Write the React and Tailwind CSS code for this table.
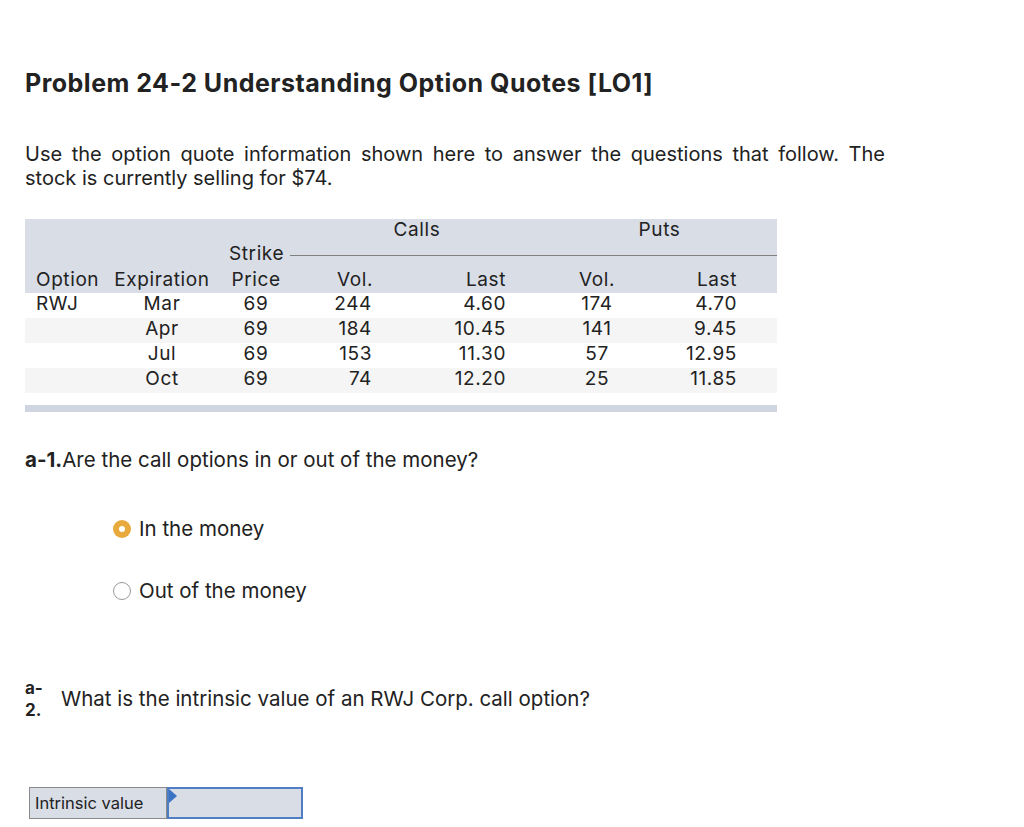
import React from "react";

const rows = [
  { opt: "RWJ", exp: "Mar", strike: "69", cvol: "244", clast: "4.60", pvol: "174", plast: "4.70" },
  { opt: "", exp: "Apr", strike: "69", cvol: "184", clast: "10.45", pvol: "141", plast: "9.45" },
  { opt: "", exp: "Jul", strike: "69", cvol: "153", clast: "11.30", pvol: "57", plast: "12.95" },
  { opt: "", exp: "Oct", strike: "69", cvol: "74", clast: "12.20", pvol: "25", plast: "11.85" },
];

const cols = "grid grid-cols-[83px_108px_80px_88px_134px_158px_101px]";

function Radio({ checked, label }) {
  return (
    <div className="flex items-center h-[24px]">
      {checked ? (
        <span className="w-[18px] h-[18px] rounded-full bg-[#e8a93d] flex items-center justify-center">
          <span className="w-[6px] h-[6px] rounded-full bg-white" />
        </span>
      ) : (
        <span className="w-[18px] h-[18px] rounded-full border border-[#9a9a9a] bg-white" />
      )}
      <span className="ml-[8px]">{label}</span>
    </div>
  );
}

export default function App() {
  return (
    <div
      className="min-h-screen bg-white text-[#222] pl-[25px] pt-[68px]"
      style={{ fontFamily: 'Inter, "Liberation Sans", Arial, sans-serif' }}
    >
      <h1 className="text-[25px] leading-[30px] font-bold tracking-[0.5px]">
        Problem 24-2 Understanding Option Quotes [LO1]
      </h1>

      <div className="mt-[44px] text-[20px] leading-[24px] w-[860px]">
        <p className="text-justify [text-align-last:justify]">
          Use the option quote information shown here to answer the questions that follow. The
        </p>
        <p>stock is currently selling for $74.</p>
      </div>

      {/* quote table */}
      <div className="mt-[29px] w-[752px] text-[19px] leading-[22px] tracking-[0.6px]">
        <div className="bg-[#d9dde6]">
          <div className={`${cols} h-[20px] items-center`}>
            <div className="col-start-4 col-span-2 text-center pl-[20px]">Calls</div>
            <div className="col-span-2 text-center pl-[24px]">Puts</div>
          </div>
          <div className="flex items-center h-[28px] pl-[204px]">
            <span className="mt-[2px]">Strike</span>
            <span className="ml-[6px] mt-[4px] flex-1 h-px bg-[#7f7f7f]" />
          </div>
          <div className={`${cols} h-[26px] items-center`}>
            <div className="pl-[11px]">Option</div>
            <div className="text-center">Expiration</div>
            <div className="text-center">Price</div>
            <div className="text-right pr-[11px]">Vol.</div>
            <div className="text-right pr-[12px]">Last</div>
            <div className="text-center">Vol.</div>
            <div className="text-right pr-[40px]">Last</div>
          </div>
        </div>
        {rows.map((r, i) => (
          <div
            key={i}
            className={`${cols} h-[25px] items-center pb-[3px] ${i % 2 === 1 ? "bg-[#f5f5f5]" : "bg-white"}`}
          >
            <div className="pl-[11px]">{r.opt}</div>
            <div className="text-center">{r.exp}</div>
            <div className="text-center">{r.strike}</div>
            <div className="text-right pr-[12px]">{r.cvol}</div>
            <div className="text-right pr-[12px]">{r.clast}</div>
            <div className="text-center">{r.pvol}</div>
            <div className="text-right pr-[40px]">{r.plast}</div>
          </div>
        ))}
        <div className="mt-[12px] h-[7px] bg-[#cfd5e1]" />
      </div>

      {/* a-1 */}
      <p className="mt-[36px] text-[20.5px] leading-[24px]">
        <span className="font-bold">a-1.</span>Are the call options in or out of the money?
      </p>
      <div className="pl-[88px] text-[20.5px]">
        <div className="mt-[45px]">
          <Radio checked label="In the money" />
        </div>
        <div className="mt-[38px]">
          <Radio label="Out of the money" />
        </div>
      </div>

      {/* a-2 */}
      <div className="mt-[74px] flex items-center text-[20.5px]">
        <div className="w-[36px] font-bold text-[17px] leading-[22px]">
          <div>a-</div>
          <div>2.</div>
        </div>
        <p>What is the intrinsic value of an RWJ Corp. call option?</p>
      </div>

      <div className="mt-[66px] ml-[4px] flex h-[32px] text-[16.5px]">
        <div className="w-[138px] bg-[#d9dde6] border border-[#8a8a8a] flex items-center pl-[5px]">
          Intrinsic value
        </div>
        <div className="relative w-[136px] bg-[#d9dde6] border-2 border-[#4f7ec4]">
          <span className="absolute top-0 left-0 w-0 h-0 border-t-[7px] border-b-[7px] border-l-[8px] border-t-transparent border-b-transparent border-l-[#3b73c4]" />
        </div>
      </div>
    </div>
  );
}
